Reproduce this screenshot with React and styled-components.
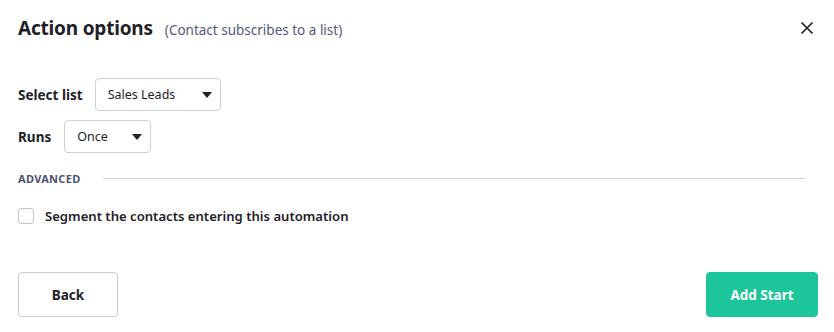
import React from "react";
import styled, { createGlobalStyle } from "styled-components";

const Global = createGlobalStyle`
  html, body { margin: 0; padding: 0; background: #fff; }
  body { font-family: "Noto Sans", "Open Sans", Arial, sans-serif; color: #1f2129; }
  * { box-sizing: border-box; }
`;

const Panel = styled.div`
  width: 834px;
  height: 332px;
  padding: 14px 16px 0 18px;
  display: flex;
  flex-direction: column;
`;

const Header = styled.div`
  display: flex;
  align-items: center;
  height: 28px;
`;

const Title = styled.h1`
  margin: 0;
  font-size: 19px;
  font-weight: 700;
  letter-spacing: -0.2px;
  color: #1f2129;
`;

const Subtitle = styled.span`
  margin-left: 12px;
  margin-top: 3px;
  font-size: 13.5px;
  color: #555a75;
`;

const Close = styled.button`
  margin-left: auto;
  margin-right: 4px;
  background: none;
  border: none;
  padding: 0;
  width: 14px;
  height: 14px;
  display: flex;
  cursor: pointer;
`;

const Form = styled.div`
  margin-top: 36px;
  display: flex;
  flex-direction: column;
  gap: 9px;
`;

const Row = styled.div`
  display: flex;
  align-items: center;
  gap: ${(p) => p.$gap || 13}px;
`;

const Label = styled.span`
  font-size: 13.5px;
  font-weight: 700;
  color: #1f2129;
`;

const Select = styled.div`
  width: ${(p) => p.$w}px;
  height: 33px;
  border: 1px solid #cfd1da;
  border-radius: 4px;
  display: flex;
  align-items: center;
  padding: 0 8px 0 12px;
  font-size: 12.5px;
  color: #1f2129;
`;

const Caret = styled.span`
  margin-left: auto;
  width: 0;
  height: 0;
  border-left: 5.5px solid transparent;
  border-right: 5.5px solid transparent;
  border-top: 6px solid #1f2129;
`;

const Divider = styled.div`
  margin-top: 18px;
  display: flex;
  align-items: center;
  gap: 22px;
  margin-right: 13px;
`;

const SectionTitle = styled.span`
  font-size: 11px;
  font-weight: 700;
  letter-spacing: 0.3px;
  color: #4b5170;
`;

const Line = styled.div`
  flex: 1;
  height: 1px;
  background: #cfd1da;
`;

const CheckRow = styled.label`
  margin-top: 21px;
  display: flex;
  align-items: center;
  gap: 11px;
`;

const Box = styled.span`
  width: 16px;
  height: 16px;
  border: 1px solid #c3c6d1;
  border-radius: 3px;
`;

const CheckText = styled.span`
  font-size: 13.1px;
  font-weight: 600;
  color: #1f2129;
`;

const Footer = styled.div`
  margin-top: auto;
  margin-bottom: 15px;
  display: flex;
  justify-content: space-between;
`;

const Button = styled.button`
  height: 45px;
  width: ${(p) => p.$w}px;
  border-radius: 4px;
  font-family: inherit;
  font-size: 13.5px;
  font-weight: 700;
  cursor: pointer;
  border: 1px solid ${(p) => (p.$primary ? "#1cc59a" : "#c8ccd8")};
  background: ${(p) => (p.$primary ? "#1cc59a" : "#fff")};
  color: ${(p) => (p.$primary ? "#fff" : "#1f2129")};
`;

export default function App() {
  return (
    <>
      <Global />
      <Panel>
        <Header>
          <Title>Action options</Title>
          <Subtitle>(Contact subscribes to a list)</Subtitle>
          <Close aria-label="Close">
            <svg width="14" height="14" viewBox="0 0 14 14">
              <path d="M1.5 1.5 L12.5 12.5 M12.5 1.5 L1.5 12.5" stroke="#1f2129" strokeWidth="1.7" />
            </svg>
          </Close>
        </Header>
        <Form>
          <Row $gap={12}>
            <Label>Select list</Label>
            <Select $w={126}>
              Sales Leads
              <Caret />
            </Select>
          </Row>
          <Row>
            <Label>Runs</Label>
            <Select $w={87}>
              Once
              <Caret />
            </Select>
          </Row>
        </Form>
        <Divider>
          <SectionTitle>ADVANCED</SectionTitle>
          <Line />
        </Divider>
        <CheckRow>
          <Box />
          <CheckText>Segment the contacts entering this automation</CheckText>
        </CheckRow>
        <Footer>
          <Button $w={100}>Back</Button>
          <Button $w={112} $primary>Add Start</Button>
        </Footer>
      </Panel>
    </>
  );
}
